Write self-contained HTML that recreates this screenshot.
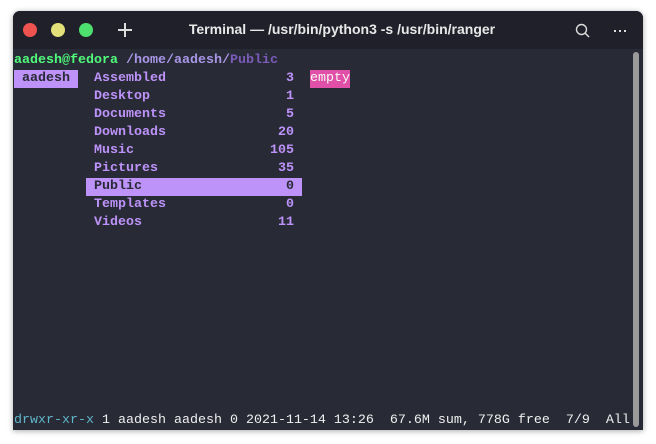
<!DOCTYPE html>
<html><head><style>
body{margin:0;width:656px;height:444px;background:#fff;position:relative;overflow:hidden;font-family:"Liberation Mono",monospace;}
.win{position:absolute;left:13px;top:11px;width:630px;height:419px;background:#282a36;border-radius:7px 7px 0 0;overflow:hidden;box-shadow:0 1px 6px rgba(0,0,0,.35);}
.tb{position:absolute;left:0;top:0;width:630px;height:38px;background:#1f2029;}
.dot{position:absolute;top:12px;width:14px;height:14px;border-radius:50%;}
.title{position:absolute;left:0;width:630px;top:10px;text-align:center;color:#e8e8e8;font:bold 14px "Liberation Sans",sans-serif;padding-left:28px;box-sizing:border-box}
.t{position:absolute;font-size:13.33px;line-height:18px;height:18px;white-space:pre;font-weight:bold;}
.p{color:#bd93f9}
.n{position:absolute;left:73px;width:216px;height:18px;}
.n span{position:absolute;right:8px}
</style></head><body>
<div class="win">
<div class="tb">
<div class="dot" style="left:10px;background:#ef5350"></div>
<div class="dot" style="left:38px;background:#e3e07a"></div>
<div class="dot" style="left:66px;background:#4ee06e"></div>
<div style="position:absolute;left:105px;top:18px;width:14px;height:1.5px;background:#ddd"></div>
<div style="position:absolute;left:111px;top:12px;width:1.5px;height:14px;background:#ddd"></div>
<div class="title">Terminal — /usr/bin/python3 -s /usr/bin/ranger</div>
<svg style="position:absolute;left:562px;top:12px" width="16" height="16"><circle cx="6.5" cy="6.5" r="5" fill="none" stroke="#ddd" stroke-width="1.4"/><line x1="10" y1="10" x2="14" y2="14" stroke="#ddd" stroke-width="1.5"/></svg>
<div style="position:absolute;left:601px;top:19px;width:2px;height:2px;background:#ddd;box-shadow:5px 0 #ddd,10px 0 #ddd"></div>
</div>
<div style="position:absolute;left:620px;top:41px;width:6px;height:375px;background:#9a9a9a;border-radius:3px"></div>
<div class="t" style="left:1px;top:41px"><span style="color:#50fa7b">aadesh@fedora</span> <span style="color:#a996e6">/home/aadesh/</span><span style="color:#7b5bb8">Public</span></div>
<div class="t" style="left:1px;top:59px;width:64px;background:#bd93f9;color:#282a36"> aadesh</div>
<div class="t" style="left:297px;top:59px;width:40px;background:#e04fa8;color:#f8f8f2;font-weight:normal">empty</div>
<div class="t p n" style="top:59px">&nbsp;Assembled<span>3</span></div>
<div class="t p n" style="top:77px">&nbsp;Desktop<span>1</span></div>
<div class="t p n" style="top:95px">&nbsp;Documents<span>5</span></div>
<div class="t p n" style="top:113px">&nbsp;Downloads<span>20</span></div>
<div class="t p n" style="top:131px">&nbsp;Music<span>105</span></div>
<div class="t p n" style="top:149px">&nbsp;Pictures<span>35</span></div>
<div class="t n" style="top:167px;background:#bd93f9;color:#282a36">&nbsp;Public<span>0</span></div>
<div class="t p n" style="top:185px">&nbsp;Templates<span>0</span></div>
<div class="t p n" style="top:203px">&nbsp;Videos<span>11</span></div>
<div class="t" style="left:1px;top:401px;font-weight:normal;color:#f0f0f0"><span style="color:#5fb6c9">drwxr-xr-x</span> 1 aadesh aadesh 0 2021-11-14 13:26  67.6M sum, 778G free  7/9  All</div>
</div>
</body></html>
